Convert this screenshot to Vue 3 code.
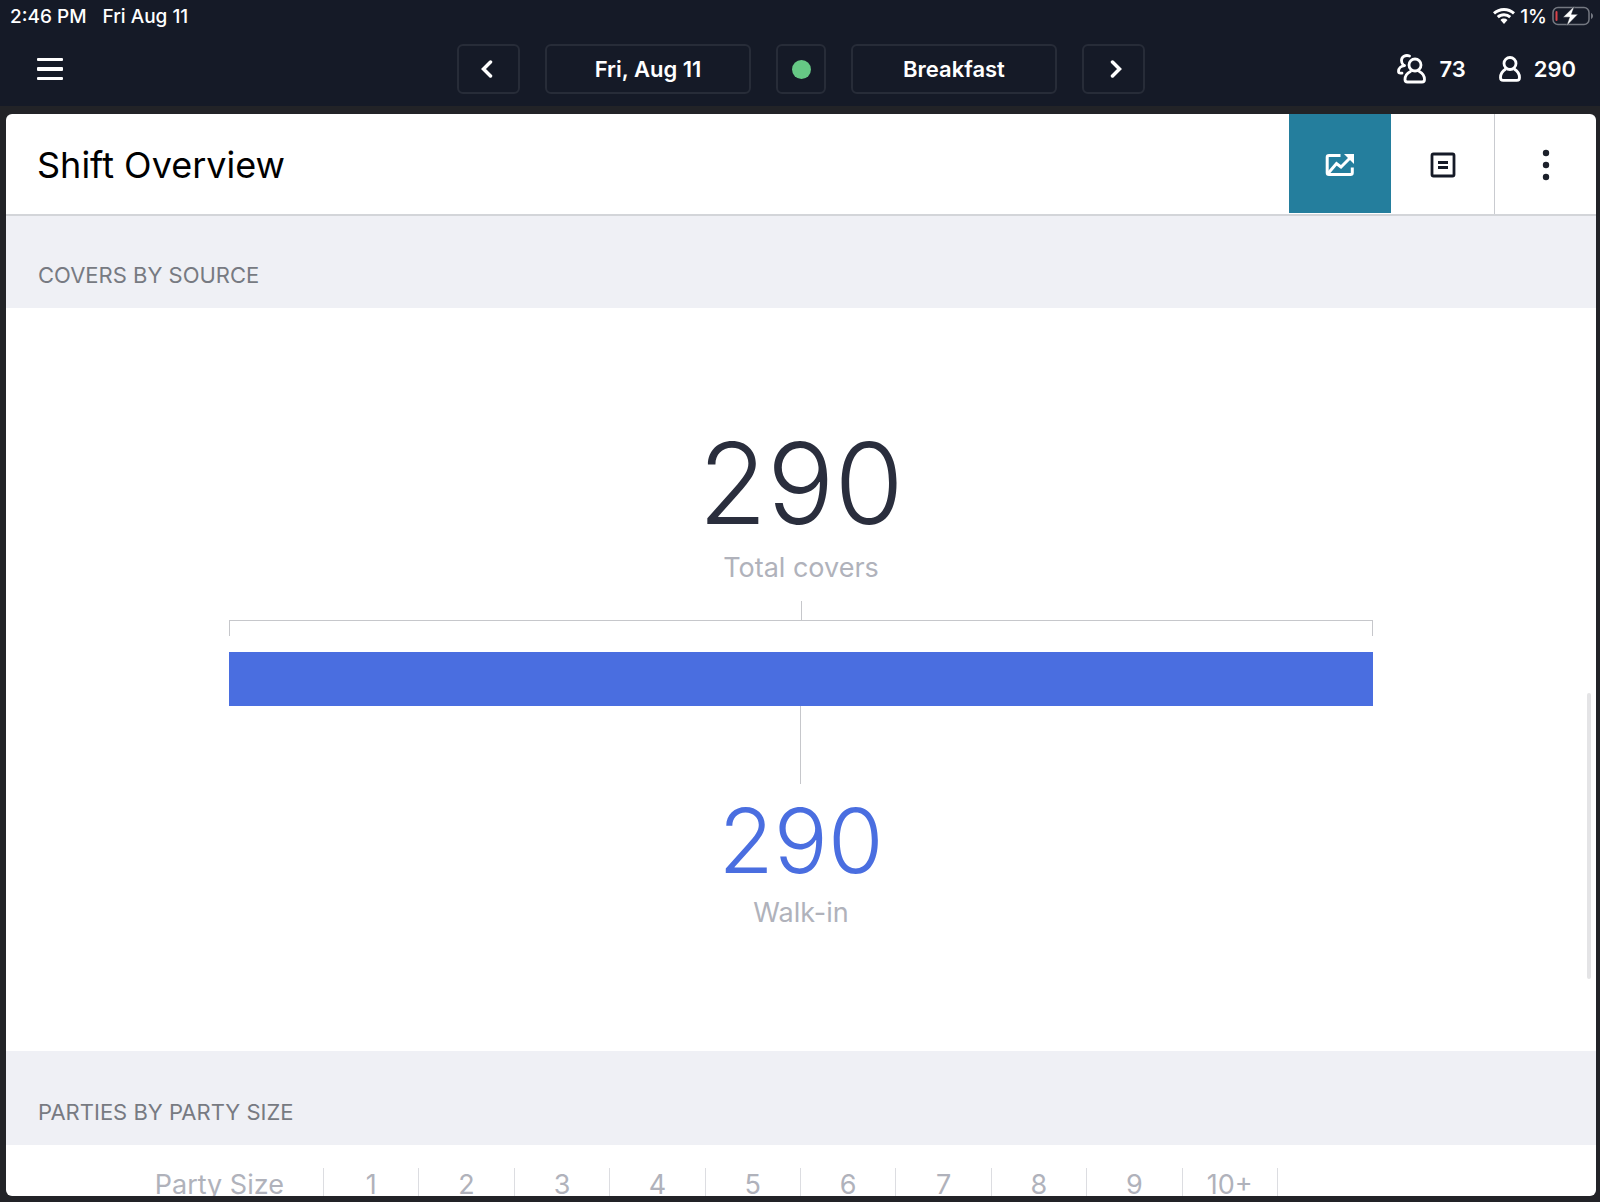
<template>
  <div class="screen">
    <header class="topbar">
      <div class="status">
        <span>2:46 PM</span>
        <span>Fri Aug 11</span>
        <div class="device">
          <svg width="22" height="16" viewBox="0 0 22 16" fill="#fff">
            <path d="M11 0C6.700 0 2.900 1.700 0 4.300l2 2.200A13.300 13.300 0 0 1 11 3c3.500 0 6.600 1.300 9 3.500l2-2.200A16.300 16.300 0 0 0 11 0z" />
            <path d="M11 5.300c-2.800 0-5.300 1-7.200 2.800l2 2.200A7.700 7.700 0 0 1 11 8.300c2 0 3.800.7 5.200 2l2-2.200A10.600 10.600 0 0 0 11 5.300z" />
            <path d="M11 10.600c-1.400 0-2.600.5-3.500 1.300L11 16l3.500-4.100a5.300 5.300 0 0 0-3.500-1.300z" />
          </svg>
          <span>1%</span>
          <svg width="42" height="20" viewBox="0 0 42 20">
            <rect x="1" y="1.500" width="36" height="17" rx="5" fill="none" stroke="#747881" stroke-width="1.500" />
            <path d="M39 7v6c1.300-.5 2-1.600 2-3s-.7-2.500-2-3z" fill="#747881" />
            <rect x="3.500" y="5" width="2" height="10" rx="1" fill="#d9434a" />
            <path d="M22.500 0 11 11.200h6.500L14.500 20 26 8.300h-6.500z" fill="#fff" stroke="#151a27" stroke-width=".5" />
          </svg>
        </div>
      </div>

      <nav class="shift-nav">
        <button class="icon-btn menu" aria-label="Menu">
          <svg width="26" height="24" viewBox="0 0 26 24" fill="#fff">
            <rect y="1" width="26" height="3" rx="1" />
            <rect y="10" width="26" height="4" rx="1" />
            <rect y="20" width="26" height="3" rx="1" />
          </svg>
        </button>
        <div class="picker">
          <button class="box arrow" aria-label="Previous shift">
            <svg width="16" height="18" viewBox="0 0 16 18">
              <path d="M9.500 2 2.500 9l7 7" fill="none" stroke="#fff" stroke-width="3.500" stroke-linecap="round" />
            </svg>
          </button>
          <button class="box wide">Fri, Aug 11</button>
          <button class="box state" aria-label="Shift status"><i class="dot"></i></button>
          <button class="box wide">Breakfast</button>
          <button class="box arrow" aria-label="Next shift">
            <svg width="16" height="18" viewBox="0 0 16 18">
              <path d="M6.500 2l7 7-7 7" fill="none" stroke="#fff" stroke-width="3.500" stroke-linecap="round" />
            </svg>
          </button>
        </div>
        <div class="counts">
          <svg width="29" height="30" viewBox="0 0 29 30" fill="none" stroke="#fff" stroke-width="2.800" stroke-linecap="round" stroke-linejoin="round">
            <circle cx="18" cy="11" r="6" />
            <path d="M13.500 17.500c-3 1.500-5.500 4.500-5.500 8 0 1.700 1 2.500 2.500 2.500h14.500c1.500 0 2.500-.8 2.500-2.500 0-3.500-2.300-6.500-5.200-8" />
            <path d="M12.500 2C8.500.5 4.500 2.800 4.500 6.500c0 1.800.6 3.200 1.800 4.500l1.200.6C4 12 1.500 14.500 1.500 17.300c0 1.200.8 1.900 2 1.900h1.500" />
          </svg>
          <span>{{ parties }}</span>
          <svg class="person" width="22" height="26" viewBox="0 0 22 26" fill="none" stroke="#fff" stroke-width="2.800" stroke-linejoin="round">
            <circle cx="11" cy="7.500" r="6" />
            <path d="M6.800 13C3.500 15 1.500 18 1.500 21.500c0 1.900 1 2.900 2.700 2.900h13.600c1.700 0 2.700-1 2.700-2.900 0-3.500-2-6.500-5.300-8.500" />
          </svg>
          <span>{{ covers }}</span>
        </div>
      </nav>
    </header>

    <main class="panel">
      <div class="panel-head">
        <h1>Shift Overview</h1>
        <button class="tab active" aria-label="Reports">
          <svg width="30" height="24" viewBox="0 0 30 24" fill="none" stroke="#fff" stroke-width="3">
            <path d="M15.500 2.500H4A1.800 1.800 0 0 0 2.200 4.300V19.700A1.800 1.800 0 0 0 4 21.500H25.500A1.800 1.800 0 0 0 27.300 19.700V14.500" />
            <path d="M3 20.500 11.500 10.500l4.500 3.500L25 5" />
            <path d="M19 1h10v10z" fill="#fff" stroke="none" />
          </svg>
        </button>
        <button class="tab notes" aria-label="Notes">
          <svg width="26" height="26" viewBox="0 0 26 26" fill="none" stroke="#151a27" stroke-width="2.800">
            <rect x="2" y="2" width="22" height="22" rx="1.500" />
            <path d="M8 10.500h10M8 15.500h10" />
          </svg>
        </button>
        <button class="tab more" aria-label="More">
          <svg width="8" height="32" viewBox="0 0 8 32" fill="#1c202b">
            <circle cx="4" cy="4" r="3.200" />
            <circle cx="4" cy="16" r="3.200" />
            <circle cx="4" cy="28" r="3.200" />
          </svg>
        </button>
      </div>

      <div class="panel-body">
        <h2>COVERS BY SOURCE</h2>
        <section class="source">
          <strong class="total">{{ covers }}</strong>
          <span class="caption">Total covers</span>
          <div class="stem"></div>
          <div class="bracket"></div>
          <div class="bar">
            <div
              v-for="s in sources"
              :key="s.name"
              class="segment"
              :style="{ width: (s.count / covers) * 100 + '%' }"
            ></div>
          </div>
          <div v-for="s in sources" :key="s.name" class="source-item">
            <div class="stem long"></div>
            <strong class="count">{{ s.count }}</strong>
            <span class="caption">{{ s.name }}</span>
          </div>
        </section>

        <h2 class="second">PARTIES BY PARTY SIZE</h2>
        <table class="sizes">
          <thead>
            <tr>
              <th class="label" scope="row">Party Size</th>
              <th v-for="n in sizes" :key="n" scope="col">{{ n }}</th>
            </tr>
          </thead>
        </table>
      </div>
      <div class="scroll-thumb"></div>
    </main>
  </div>
</template>

<script setup>
import { ref } from "vue";

const parties = ref(73);
const covers = ref(290);
const sources = ref([{ name: "Walk-in", count: 290 }]);
const sizes = ["1", "2", "3", "4", "5", "6", "7", "8", "9", "10+"];
</script>

<style>
body {
  margin: 0;
  background-color: #222327;
}
</style>

<style scoped>
.screen {
  display: flex;
  flex-direction: column;
  height: 100vh;
  font-family: Inter, "Liberation Sans", sans-serif;
}

button {
  display: flex;
  align-items: center;
  justify-content: center;
  padding: 0;
  border: none;
  background: none;
  font: inherit;
  color: inherit;
  cursor: pointer;
}

.topbar {
  background-color: #151a27;
  color: #fff;
}

.status {
  display: flex;
  align-items: center;
  gap: 16px;
  height: 32px;
  padding: 0 6px 0 10px;
  font-size: 19px;
  font-weight: 500;
}

.device {
  display: flex;
  align-items: center;
  gap: 5px;
  margin-left: auto;
}

.shift-nav {
  display: grid;
  grid-template-columns: 1fr auto 1fr;
  align-items: center;
  height: 74px;
  padding: 0 24px 0 26px;
  font-size: 22px;
  font-weight: 600;
}

.icon-btn.menu {
  width: 48px;
  height: 48px;
}

.picker {
  display: flex;
  gap: 25px;
}

.box {
  box-sizing: border-box;
  height: 50px;
  border: 2px solid #272c38;
  border-radius: 6px;
}

.arrow {
  width: 63px;
}

.wide {
  width: 206px;
}

.state {
  width: 50px;
}

.dot {
  width: 19px;
  height: 19px;
  border-radius: 50%;
  background-color: #66c885;
}

.counts {
  display: flex;
  align-items: center;
  justify-content: flex-end;
  gap: 13px;
}

.person {
  margin-left: 20px;
}

.panel {
  position: relative;
  display: flex;
  flex: 1;
  flex-direction: column;
  min-height: 0;
  margin: 8px 4px 6px 6px;
  border-radius: 6px;
  background-color: #fff;
  overflow: hidden;
}

.panel-head {
  display: flex;
  height: 100px;
  border-bottom: 2px solid #d3d5d9;
}

h1 {
  flex: 1;
  margin: 0;
  padding-left: 31px;
  font-size: 36px;
  font-weight: 400;
  line-height: 103px;
  color: #000;
}

.tab {
  width: 102px;
  padding-top: 2px;
}

.tab.active {
  height: 99px;
  background-color: #247e9d;
}

.tab.notes {
  width: 103px;
}

.tab.more {
  border-left: 1px solid #c9cbd0;
}

.panel-body {
  flex: 1;
  min-height: 0;
  overflow: hidden;
}

h2 {
  display: flex;
  align-items: flex-end;
  box-sizing: border-box;
  height: 92px;
  margin: 0;
  padding: 0 32px 19px;
  background-color: #eff0f5;
  font-size: 22px;
  font-weight: 400;
  line-height: 28px;
  color: #777a82;
}

h2.second {
  height: 94px;
}

.source {
  display: flex;
  flex-direction: column;
  align-items: center;
  box-sizing: border-box;
  height: 743px;
  padding-top: 111px;
}

.total {
  font-size: 112px;
  font-weight: 300;
  line-height: 128px;
  color: #2a2e3d;
}

.caption {
  font-size: 27px;
  font-weight: 400;
  line-height: 40px;
  color: #b0b2bb;
}

.total + .caption {
  padding: 1px 0 13px;
}

.stem {
  width: 1px;
  height: 19px;
  background-color: #c6c7cb;
}

.stem.long {
  height: 78px;
}

.bracket {
  box-sizing: border-box;
  width: 72%;
  height: 16px;
  border: 1px solid #c6c7cb;
  border-bottom: none;
}

.bar {
  display: flex;
  width: 72%;
  height: 54px;
  margin-top: 16px;
}

.segment {
  background-color: #4a6ee0;
}

.source-item {
  display: flex;
  flex-direction: column;
  align-items: center;
}

.count {
  padding: 7px 0 2px;
  font-size: 90px;
  font-weight: 300;
  line-height: 100px;
  color: #4a6ee0;
}

.sizes {
  width: 80%;
  margin-top: 23px;
  border-collapse: separate;
  border-spacing: 0;
  table-layout: fixed;
  font-size: 27px;
  line-height: 34px;
  color: #b0b2bb;
}

.sizes th {
  height: 40px;
  padding: 0;
  border-right: 1px solid #dcdde1;
  font-weight: 400;
  text-align: center;
  vertical-align: top;
}

.sizes .label {
  width: 25%;
  box-sizing: border-box;
  padding-right: 39px;
  text-align: right;
}

.scroll-thumb {
  position: absolute;
  top: 579px;
  right: 5px;
  width: 4px;
  height: 286px;
  border-radius: 2px;
  background-color: #e4e4e6;
}
</style>
